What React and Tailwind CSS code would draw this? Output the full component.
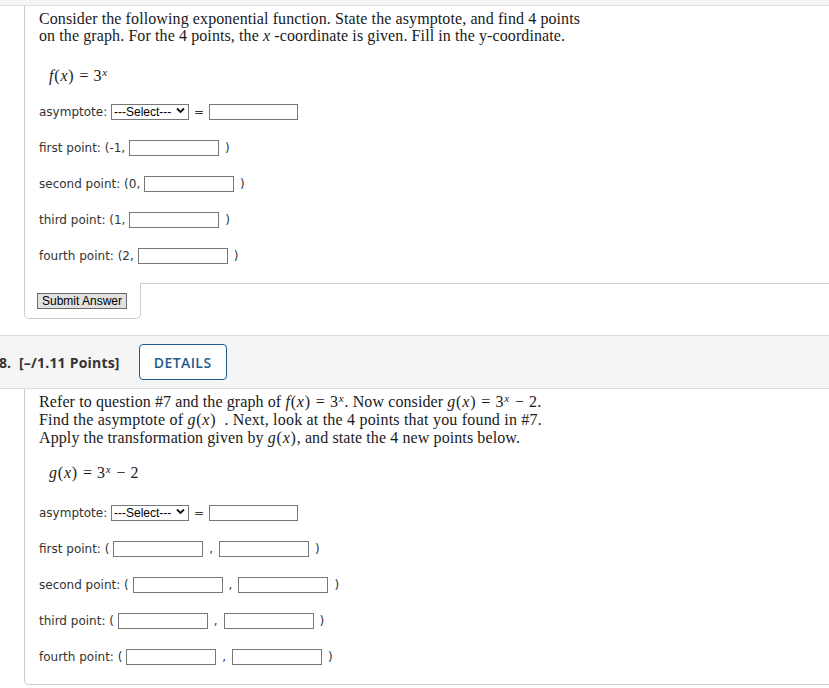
import { useState } from 'react'

// Pregunta tipo WebAssign: función exponencial y transformación

const SERIF = "font-['Liberation_Serif','DejaVu_Serif',serif]"
const SANS = "font-['DejaVu_Sans',Verdana,sans-serif]"

function Caja({ ancho = 'w-[90px]' }) {
  return (
    <input
      type="text"
      className={`${ancho} h-[16px] border border-[#767676] bg-white align-middle outline-none`}
    />
  )
}

function Selector() {
  return (
    <span className="relative inline-block align-middle">
      <select className="appearance-none w-[78px] h-[16px] border border-[#767676] bg-white pl-[2px] text-[12px] leading-[14px] text-black font-['Liberation_Sans',Arial,sans-serif] outline-none">
        <option>---Select---</option>
        <option>x =</option>
        <option>y =</option>
      </select>
      <svg
        className="absolute right-[4px] top-[4px] pointer-events-none"
        width="9"
        height="7"
        viewBox="0 0 9 7"
      >
        <path d="M1 1.5 L4.5 5 L8 1.5" fill="none" stroke="#111" strokeWidth="1.8" />
      </svg>
    </span>
  )
}

// Expresiones matemáticas: f(x) = 3^x, g(x) = 3^x − 2
function Fx({ letra = 'f' }) {
  return (
    <span className="tracking-[0.8px]">
      <i>{letra}</i>(<i>x</i>)
    </span>
  )
}

function Igual() {
  return <span className="mx-[5px]">=</span>
}

function Exp() {
  return (
    <span className="tracking-[0.8px]">
      3<sup className="text-[11px]"><i>x</i></sup>
    </span>
  )
}

function Menos() {
  return <span className="mx-[5px]">−</span>
}

function Fila({ children }) {
  return (
    <div className={`h-[36px] flex items-center text-[12px] text-[#333] ${SANS}`}>
      {children}
    </div>
  )
}

function Asintota() {
  return (
    <Fila>
      <span>asymptote:&nbsp;</span>
      <Selector />
      <span className="mx-[5px]">=</span>
      <Caja ancho="w-[89px]" />
    </Fila>
  )
}

function PuntoSimple({ etiqueta }) {
  return (
    <Fila>
      <span>{etiqueta}&nbsp;</span>
      <Caja />
      <span className="ml-[6px]">)</span>
    </Fila>
  )
}

function PuntoDoble({ etiqueta }) {
  return (
    <Fila>
      <span>{etiqueta}&nbsp;</span>
      <Caja />
      <span className="mx-[6px]">,</span>
      <Caja />
      <span className="ml-[6px]">)</span>
    </Fila>
  )
}

export default function App() {
  const [enviado, setEnviado] = useState(false)

  return (
    <div className="w-[829px] h-[688px] overflow-hidden bg-white text-[#1a1a1a]">
      <div className="h-[6px] bg-[#f5f5f5] border-b border-[#ddd]" />

      {/* Pregunta 7 */}
      <div className="ml-[24px]">
        <div className="border-l border-[#ccc] pl-[14px] pt-[4px] pb-[9px]">
          <p className={`${SERIF} text-[16px] leading-[17px] tracking-[0.1px]`}>
            Consider the following exponential function. State the asymptote, and find 4 points
            <br />
            on the graph. For the 4 points, the <i>x</i> -coordinate is given. Fill in the y-coordinate.
          </p>
          <div className={`${SERIF} mt-[14px] h-[36px] flex items-center pl-[10px] text-[16px]`}>
            <span>
              <Fx />
              <Igual />
              <Exp />
            </span>
          </div>
          <Asintota />
          <PuntoSimple etiqueta="first point: (-1," />
          <PuntoSimple etiqueta="second point: (0," />
          <PuntoSimple etiqueta="third point: (1," />
          <PuntoSimple etiqueta="fourth point: (2," />
        </div>
        <div className="flex">
          <div className="w-[117px] h-[36px] border-l border-r border-b border-[#ccc] rounded-b-[5px] flex items-center pl-[12px]">
            <button
              onClick={() => setEnviado(!enviado)}
              className="h-[16px] px-[4px] bg-[#e1e1e1] border border-[#6b6b6b] text-[12px] leading-[14px] text-black font-['Liberation_Sans',Arial,sans-serif]"
            >
              Submit Answer
            </button>
          </div>
          <div className="flex-1 border-t border-[#ccc]" />
        </div>
      </div>

      {/* Cabecera pregunta 8 */}
      <div className="mt-[16px] h-[54px] bg-[#f5f5f5] border-y border-[#ddd] flex items-center font-['Open_Sans',sans-serif]">
        <span className="-ml-[1px] font-bold text-[14px] text-[#333]">8.</span>
        <span className="ml-[8px] font-bold text-[14px] tracking-[0.2px] text-[#333]">[–/1.11 Points]</span>
        <button className="ml-[19px] w-[88px] h-[36px] shrink-0 border border-[#1f5b8f] rounded-[4px] bg-white font-semibold text-[14px] tracking-[0.4px] text-[#1f5b8f]">
          DETAILS
        </button>
      </div>

      {/* Pregunta 8 */}
      <div className="ml-[24px] border-l border-b border-[#ccc] rounded-bl-[5px] pl-[14px] pt-[4px] pb-[9px]">
        <p className={`${SERIF} text-[16px] leading-[18px] tracking-[0.1px]`}>
          Refer to question #7 and the graph of <Fx /><Igual /><Exp />. Now consider <Fx letra="g" /><Igual /><Exp /><Menos />2.
          <br />
          <span className="tracking-[0.2px]">
            Find the asymptote of <Fx letra="g" /><span className="ml-[8px]">.</span> Next, look at the 4 points that you found in #7.
          </span>
          <br />
          Apply the transformation given by <Fx letra="g" />, and state the 4 new points below.
        </p>
        <div className={`${SERIF} mt-[8px] h-[36px] flex items-center pl-[10px] text-[16px]`}>
          <span>
            <Fx letra="g" />
            <Igual />
            <Exp />
            <Menos />2
          </span>
        </div>
        <div className="mt-[4px]">
          <Asintota />
        </div>
        <PuntoDoble etiqueta="first point: (" />
        <PuntoDoble etiqueta="second point: (" />
        <PuntoDoble etiqueta="third point: (" />
        <PuntoDoble etiqueta="fourth point: (" />
      </div>
    </div>
  )
}
